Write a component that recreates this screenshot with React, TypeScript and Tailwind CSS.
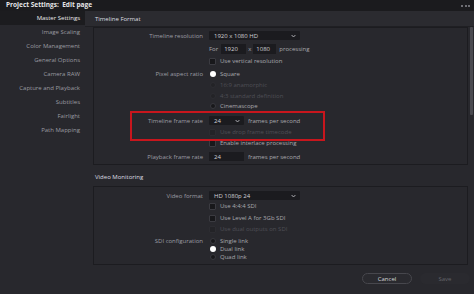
import React from "react";

const Chevron = () => (
  <svg width="5" height="4" viewBox="0 0 5 4" className="shrink-0">
    <path d="M0.6 1 L2.5 3 L4.4 1" fill="none" stroke="#b8b8bd" strokeWidth="0.9" />
  </svg>
);

function Row({
  cls,
  label,
  children,
}: {
  cls: string;
  label?: string;
  children?: React.ReactNode;
}) {
  return (
    <div className={`flex items-center shrink-0 ${cls}`}>
      <div className="w-[109px] text-right text-[#9d9da4] whitespace-nowrap leading-none">{label}</div>
      <div className="ml-[6px] flex items-center h-full">{children}</div>
    </div>
  );
}

const Check = ({ dim }: { dim?: boolean }) => (
  <span
    className={
      dim
        ? "w-[7px] h-[7px] shrink-0 rounded-[1px] bg-[#232327] border border-[#2c2c31]"
        : "w-[7px] h-[7px] shrink-0 rounded-[1px] bg-[#18181b] border border-[#3b3b41]"
    }
  />
);

const Radio = ({ on, dim }: { on?: boolean; dim?: boolean }) => (
  <span className="w-[7px] h-[7px] shrink-0 flex items-center justify-center">
    <span
      className={
        on
          ? "w-[6px] h-[6px] rounded-full bg-white"
          : dim
          ? "w-[6px] h-[6px] rounded-full bg-[#232327] border border-[#2d2d32]"
          : "w-[6px] h-[6px] rounded-full bg-[#18181b] border border-[#38383e]"
      }
    />
  </span>
);

const Opt = ({ children, dim }: { children: React.ReactNode; dim?: boolean }) => (
  <span className={dim ? "ml-[4px] text-[#4f4f56] leading-none whitespace-nowrap" : "ml-[4px] text-[#a8a8ae] leading-none whitespace-nowrap"}>
    {children}
  </span>
);

export default function App() {
  const side = [
    "Image Scaling",
    "Color Management",
    "General Options",
    "Camera RAW",
    "Capture and Playback",
    "Subtitles",
    "Fairlight",
    "Path Mapping",
  ];
  return (
    <div
      className="w-[474px] h-[294px] bg-[#28282d] flex flex-col overflow-hidden text-[6px]"
      style={{ fontFamily: '"Open Sans", "Noto Sans", sans-serif' }}
    >
      {/* title bar */}
      <div className="h-[11px] shrink-0 bg-[#1b1b1e] flex items-center justify-between pl-[6px] pr-[3px]">
        <span className="text-[6.5px] font-bold text-[#e6e6e8] leading-none whitespace-nowrap">
          Project Settings:&nbsp; Edit page
        </span>
        <span className="flex gap-[1.5px] items-center mr-[1px]">
          <span className="w-[2px] h-[2px] rounded-full bg-[#8a8a90]" />
          <span className="w-[2px] h-[2px] rounded-full bg-[#8a8a90]" />
          <span className="w-[2px] h-[2px] rounded-full bg-[#8a8a90]" />
        </span>
      </div>

      <div className="flex flex-1 min-h-0">
        {/* sidebar */}
        <div className="w-[85px] shrink-0 flex flex-col bg-[#28282d]">
          <div className="h-[14px] bg-[#1c1c1f] flex items-center justify-end pr-[5px] text-[#ececee] leading-none whitespace-nowrap">
            Master Settings
          </div>
          {side.map((s) => (
            <div
              key={s}
              className="h-[14px] flex items-center justify-end pr-[5px] text-[#9b9ba1] leading-none whitespace-nowrap"
            >
              {s}
            </div>
          ))}
        </div>

        {/* main */}
        <div className="flex-1 flex flex-col min-w-0">
          <div className="h-[16px] shrink-0 bg-[#2b2b30] border-b border-[#1f1f23] flex items-center pl-[10px] text-[#dedee0] leading-none">
            Timeline Format
          </div>

          <div className="flex flex-1 min-h-0">
            <div className="flex-1 flex flex-col pl-[8px]">
              {/* panel 1 */}
              <div className="relative h-[138px] shrink-0 bg-[#28282d] border border-[#1c1c20] flex flex-col">
                <Row cls="h-[9px] mt-[3px]" label="Timeline resolution">
                  <div className="w-[91px] h-[9px] bg-[#1b1b1f] rounded-[1px] flex items-center justify-between pl-[5px] pr-[4px] text-[#d2d2d6] leading-none">
                    <span>1920 x 1080 HD</span>
                    <Chevron />
                  </div>
                </Row>
                <Row cls="h-[10px] mt-[4px]">
                  <span className="text-[#a8a8ae] leading-none">For</span>
                  <div className="ml-[3px] w-[25px] h-[10px] bg-[#1b1b1f] flex items-center pl-[3px] text-[#d2d2d6] leading-none">1920</div>
                  <span className="ml-[2px] text-[#a8a8ae] leading-none">x</span>
                  <div className="ml-[2px] w-[23px] h-[10px] bg-[#1b1b1f] flex items-center pl-[3px] text-[#d2d2d6] leading-none">1080</div>
                  <span className="ml-[3px] text-[#a8a8ae] leading-none">processing</span>
                </Row>
                <Row cls="h-[8px] mt-[3px]">
                  <Check />
                  <Opt>Use vertical resolution</Opt>
                </Row>
                <Row cls="h-[8px] mt-[5px]" label="Pixel aspect ratio">
                  <Radio on />
                  <Opt>Square</Opt>
                </Row>
                <Row cls="h-[8px] mt-[3px]">
                  <Radio dim />
                  <Opt dim>16:9 anamorphic</Opt>
                </Row>
                <Row cls="h-[8px] mt-[3px]">
                  <Radio dim />
                  <Opt dim>4:3 standard definition</Opt>
                </Row>
                <Row cls="h-[8px] mt-[2px]">
                  <Radio />
                  <Opt>Cinemascope</Opt>
                </Row>
                <Row cls="h-[9px] mt-[6px]" label="Timeline frame rate">
                  <div className="w-[35px] h-[9px] bg-[#1b1b1f] rounded-[1px] flex items-center justify-between pl-[5px] pr-[4px] text-[#d2d2d6] leading-none">
                    <span>24</span>
                    <Chevron />
                  </div>
                  <span className="ml-[4px] text-[#a8a8ae] leading-none whitespace-nowrap">frames per second</span>
                </Row>
                <Row cls="h-[8px] mt-[3px]">
                  <Check dim />
                  <Opt dim>Use drop frame timecode</Opt>
                </Row>
                <Row cls="h-[8px] mt-[3px]">
                  <Check />
                  <Opt>Enable interlace processing</Opt>
                </Row>
                <Row cls="h-[9px] mt-[5px]" label="Playback frame rate">
                  <div className="w-[35px] h-[9px] bg-[#1b1b1f] flex items-center pl-[5px] text-[#d2d2d6] leading-none">24</div>
                  <span className="ml-[4px] text-[#a8a8ae] leading-none whitespace-nowrap">frames per second</span>
                </Row>

                <div className="absolute left-[36px] top-[83px] w-[195px] h-[30px] border-2 border-[#c8161d]" />
              </div>

              {/* header 2 */}
              <div className="h-[21px] shrink-0 flex items-center pl-[2px] pt-[2px] text-[#dedee0] leading-none">
                Video Monitoring
              </div>

              {/* panel 2 */}
              <div className="h-[79px] shrink-0 bg-[#28282d] border border-[#1c1c20] flex flex-col">
                <Row cls="h-[9px] mt-[4px]" label="Video format">
                  <div className="w-[91px] h-[9px] bg-[#1b1b1f] rounded-[1px] flex items-center justify-between pl-[5px] pr-[4px] text-[#d2d2d6] leading-none">
                    <span>HD 1080p 24</span>
                    <Chevron />
                  </div>
                </Row>
                <Row cls="h-[8px] mt-[2px]">
                  <Check />
                  <Opt>Use 4:4:4 SDI</Opt>
                </Row>
                <Row cls="h-[8px] mt-[4px]">
                  <Check />
                  <Opt>Use Level A for 3Gb SDI</Opt>
                </Row>
                <Row cls="h-[8px] mt-[3px]">
                  <Check dim />
                  <Opt dim>Use dual outputs on SDI</Opt>
                </Row>
                <Row cls="h-[8px] mt-[4px]" label="SDI configuration">
                  <Radio />
                  <Opt>Single link</Opt>
                </Row>
                <Row cls="h-[8px] mt-[0px]">
                  <Radio on />
                  <Opt>Dual link</Opt>
                </Row>
                <Row cls="h-[8px] mt-[0px]">
                  <Radio />
                  <Opt>Quad link</Opt>
                </Row>
              </div>
            </div>

            {/* scrollbar */}
            <div className="w-[6px] shrink-0 pl-[2px] pr-[1px]">
              <div className="w-[3px] h-[88px] bg-[#4a4a50] rounded-[1px]" />
            </div>
          </div>

          {/* bottom bar */}
          <div className="h-[29px] shrink-0 flex justify-end items-start pt-[8px] pr-[4px] gap-[8px]">
            <div className="w-[50px] h-[11px] rounded-full border border-[#47474d] bg-[#2a2a2f] flex items-center justify-center text-[#d4d4d8] leading-none">
              Cancel
            </div>
            <div className="w-[50px] h-[11px] rounded-full bg-[#2a2a2f] flex items-center justify-center text-[#64646b] leading-none">
              Save
            </div>
          </div>
        </div>
      </div>
    </div>
  );
}
